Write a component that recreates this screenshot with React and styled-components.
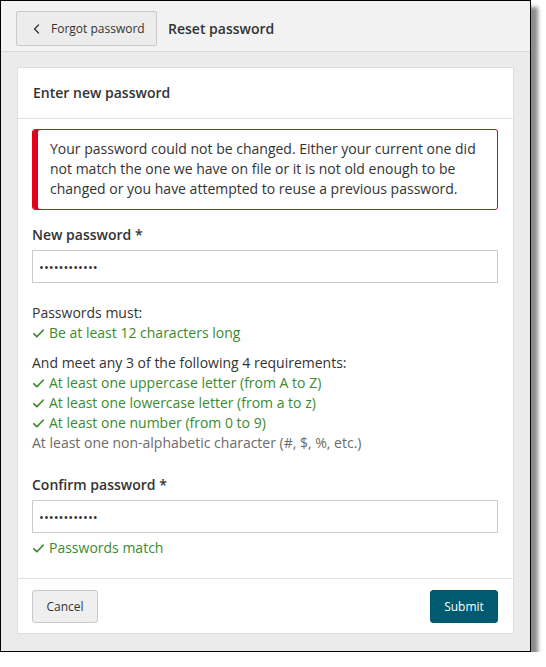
import React from 'react';
import styled, { createGlobalStyle } from 'styled-components';

const GlobalStyle = createGlobalStyle`
  body {
    margin: 0;
    background: #fff;
    font-family: "Open Sans", "Liberation Sans", sans-serif;
    color: #333;
  }
  * { box-sizing: border-box; }
`;

const Frame = styled.div`
  width: 531px;
  height: 652px;
  border: 1px solid #000;
  background: #ebebeb;
  box-shadow: 7px 7px 4px rgba(0, 0, 0, 0.45);
  display: flex;
  flex-direction: column;
`;

const TopBar = styled.header`
  height: 51px;
  background: #f2f2f2;
  border-bottom: 1px solid #d9d9d9;
  display: flex;
  align-items: flex-start;
  padding: 10px 15px 0;
  gap: 11px;
`;

const BackButton = styled.button`
  height: 35px;
  width: 141px;
  display: flex;
  align-items: center;
  gap: 8px;
  padding: 0 0 0 14px;
  background: #ececec;
  border: 1px solid #c9c9c9;
  border-radius: 2px;
  font-family: inherit;
  font-size: 12px;
  color: #333;
`;

const PageTitle = styled.h1`
  margin: 0;
  font-size: 14px;
  font-weight: 600;
  line-height: 36px;
  color: #333;
`;

const Body = styled.main`
  flex: 1;
  padding: 15px 16px 17px;
`;

const Card = styled.section`
  background: #fff;
  border: 1px solid #dedede;
  display: flex;
  flex-direction: column;
`;

const CardHeader = styled.h2`
  margin: 0;
  padding: 15px 15px;
  font-size: 14px;
  font-weight: 600;
  line-height: 20px;
  border-bottom: 1px solid #e3e3e3;
`;

const CardBody = styled.div`
  padding: 10px 15px 20px 14px;
  display: flex;
  flex-direction: column;
`;

const Alert = styled.div`
  border: 1px solid #e2001d;
  border-radius: 3px;
  box-shadow: inset 5px 0 0 #e2001d;
  padding: 9px 12px 10px 17px;
  font-size: 14px;
  line-height: 20px;
  color: #333;
`;

const Label = styled.label`
  display: block;
  margin-top: ${p => p.$top}px;
  font-size: 14px;
  font-weight: 600;
  line-height: 20px;
`;

const Input = styled.input`
  margin-top: 5px;
  height: 33px;
  width: 100%;
  border: 1px solid #cbcbcb;
  padding: 0 6px;
  font-family: inherit;
  font-size: 13px;
  color: #333;
`;

const RuleList = styled.ul`
  list-style: none;
  margin: ${p => p.$top}px 0 0;
  padding: 0;
  font-size: 14px;
  line-height: 20px;
`;

const Rule = styled.li`
  display: flex;
  align-items: center;
  gap: 4px;
  color: ${p => (p.$ok ? '#3b8a2f' : p.$muted ? '#6b6b6b' : '#333')};
`;

const CardFooter = styled.div`
  border-top: 1px solid #e3e3e3;
  padding: 11px 15px 10px 14px;
  display: flex;
  justify-content: space-between;
`;

const Button = styled.button`
  height: 33px;
  width: ${p => (p.$primary ? 68 : 66)}px;
  padding: 0;
  border-radius: 3px;
  border: 1px solid ${p => (p.$primary ? '#005b70' : '#cacaca')};
  background: ${p => (p.$primary ? '#005b70' : '#efefef')};
  color: ${p => (p.$primary ? '#fff' : '#333')};
  font-family: inherit;
  font-size: 12px;
`;

const Check = () => (
  <svg width="13" height="13" viewBox="0 0 24 24" fill="none" stroke="#3b8a2f" strokeWidth="3.2" strokeLinecap="round" strokeLinejoin="round">
    <path d="M3.5 12.5l5.5 5.5L20.5 6" />
  </svg>
);

const Chevron = () => (
  <svg width="12" height="12" viewBox="0 0 24 24" fill="none" stroke="#333" strokeWidth="2.6" strokeLinecap="round" strokeLinejoin="round">
    <path d="M15 4l-8 8 8 8" />
  </svg>
);

function RuleItem({ ok, muted, children }) {
  return (
    <Rule $ok={ok} $muted={muted}>
      {ok && <Check />}
      {children}
    </Rule>
  );
}

export default function App() {
  return (
    <>
      <GlobalStyle />
      <Frame>
        <TopBar>
          <BackButton>
            <Chevron />
            Forgot password
          </BackButton>
          <PageTitle>Reset password</PageTitle>
        </TopBar>
        <Body>
          <Card>
            <CardHeader>Enter new password</CardHeader>
            <CardBody>
              <Alert>
                Your password could not be changed. Either your current one did not match the one we have on file or it is not old enough to be changed or you have attempted to reuse a previous password.
              </Alert>
              <Label $top={15}>New password *</Label>
              <Input type="password" defaultValue="abcdefghijkl" readOnly />
              <RuleList $top={20}>
                <Rule>Passwords must:</Rule>
                <RuleItem ok>Be at least 12 characters long</RuleItem>
              </RuleList>
              <RuleList $top={10}>
                <Rule>And meet any 3 of the following 4 requirements:</Rule>
                <RuleItem ok>At least one uppercase letter (from A to Z)</RuleItem>
                <RuleItem ok>At least one lowercase letter (from a to z)</RuleItem>
                <RuleItem ok>At least one number (from 0 to 9)</RuleItem>
                <RuleItem muted>At least one non-alphabetic character (#, $, %, etc.)</RuleItem>
              </RuleList>
              <Label $top={22}>Confirm password *</Label>
              <Input type="password" defaultValue="abcdefghijkl" readOnly />
              <RuleList $top={5}>
                <RuleItem ok>Passwords match</RuleItem>
              </RuleList>
            </CardBody>
            <CardFooter>
              <Button>Cancel</Button>
              <Button $primary>Submit</Button>
            </CardFooter>
          </Card>
        </Body>
      </Frame>
    </>
  );
}
